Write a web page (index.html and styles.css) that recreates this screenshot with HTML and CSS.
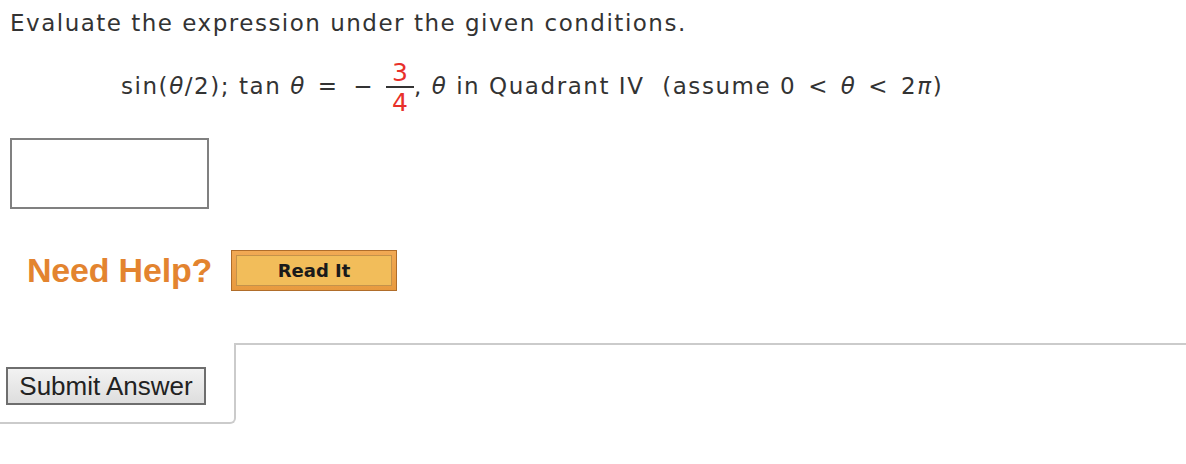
FILE: index.html
```html
<!DOCTYPE html>
<html>
<head>
<meta charset="utf-8">
<link rel="stylesheet" href="styles.css">
</head>
<body>
<div class="page">
  <p class="prompt">Evaluate the expression under the given conditions.</p>
  <div class="math">
    <span>sin(<i>θ</i>/2); tan <i>θ</i> <span class="op">=</span> <span class="op">−</span> </span>
    <span class="frac"><span class="num">3</span><span class="den">4</span></span>
    <span>, <i>θ</i> in Quadrant IV&nbsp;&nbsp;(assume 0 <span class="op">&lt;</span> <i>θ</i> <span class="op">&lt;</span> 2<i>π</i>)</span>
  </div>
  <div class="answer"><input class="answer-box" type="text"></div>
  <div class="help">
    <span class="need">Need Help?</span>
    <button class="readit"><span class="readit-inner">Read It</span></button>
  </div>
  <div class="footer">
    <div class="submit-cell"><button class="submit">Submit Answer</button></div>
    <div class="rest"></div>
  </div>
</div>
</body>
</html>
```
FILE: styles.css
```css
* { box-sizing: border-box; }
html, body { margin: 0; background: #fff; }
.page { font-family: "DejaVu Sans", Verdana, sans-serif; color: #333; }
.prompt { margin: 0; padding: 8px 0 0 10px; font-size: 23px; line-height: 30px; letter-spacing: 1.5px; }
.math {
  display: flex; align-items: center; padding-left: 121px; margin-top: 20px;
  font-size: 23px; letter-spacing: 1.55px; white-space: pre; height: 56px;
}
.math i { font-style: oblique; }
.math .op { margin: 0 3px; }
.frac {
  display: inline-flex; flex-direction: column; align-items: center; color: #e8302a;
  font-size: 25px; line-height: 27px; margin-top: 2px; letter-spacing: 0;
}
.frac .num { border-bottom: 2px solid #333; padding: 0 6px 0; }
.frac .den { padding-top: 1px; }
.answer { padding: 24px 0 0 10px; }
.answer-box { display: block; width: 199px; height: 71px; border: 2px solid #808080; border-radius: 0; margin: 0; }
.help { display: flex; align-items: center; padding: 41px 0 0 27px; gap: 19px; }
.need { font-family: "Liberation Sans", Arial, sans-serif; font-weight: bold; font-size: 34px; color: #e3842f; letter-spacing: -0.2px; }
.readit {
  width: 166px; height: 41px; padding: 4px; margin: 0;
  background: linear-gradient(#f1a954, #e89a3f); border: 1px solid #b06d2a; border-radius: 0;
  display: flex; cursor: pointer;
}
.readit-inner {
  flex: 1; display: flex; align-items: center; justify-content: center;
  background: #f2bd5a; border: 1px solid #c4924a;
  font-family: "DejaVu Sans", Verdana, sans-serif; font-weight: bold; font-size: 18px; color: #1a1a1a;
}
.footer { display: flex; margin-top: 52px; }
.submit-cell {
  width: 236px; height: 81px; border-right: 2px solid #cbcbcb; border-bottom: 2px solid #cbcbcb;
  border-bottom-right-radius: 6px; padding: 24px 0 0 6px;
}
.submit {
  width: 200px; height: 38px; margin: 0; padding: 0;
  font-family: "Liberation Sans", Arial, sans-serif; font-size: 26px; color: #222;
  background: linear-gradient(#f2f2f2, #dedede); border: 2px solid #6e6e6e; border-radius: 0;
}
.rest { flex: 1; border-top: 2px solid #cbcbcb; }
```
